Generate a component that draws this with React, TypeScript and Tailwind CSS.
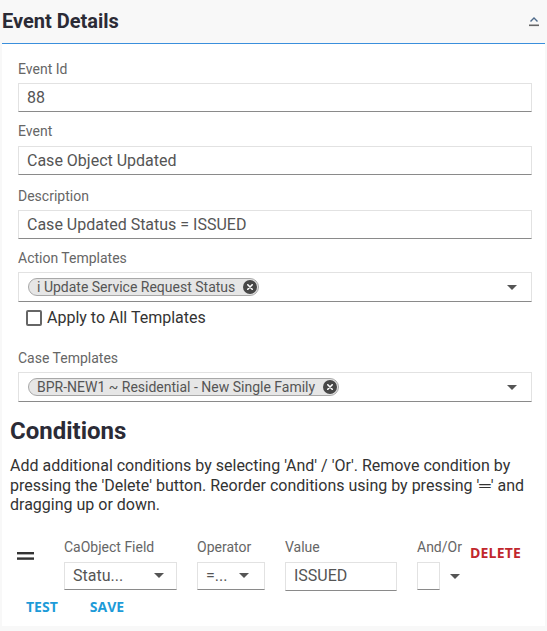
import React from "react";

const Caret = () => (
  <svg width="10" height="5" viewBox="0 0 10 5" className="shrink-0">
    <path d="M0 0h10L5 5z" fill="#555" />
  </svg>
);

const CloseCircle = () => (
  <span className="w-[14px] h-[14px] rounded-full bg-[#474747] flex items-center justify-center shrink-0">
    <svg width="6" height="6" viewBox="0 0 6 6">
      <path d="M0.8 0.8L5.2 5.2M5.2 0.8L0.8 5.2" stroke="#fff" strokeWidth="1.6" strokeLinecap="round" />
    </svg>
  </span>
);

const Label = ({ children, className = "" }: { children: React.ReactNode; className?: string }) => (
  <div className={"h-[20px] leading-[20px] text-[14px] text-[#666] " + className}>{children}</div>
);

const TextBox = ({ value, className = "" }: { value: string; className?: string }) => (
  <div
    className={
      "h-[29px] border border-[#e2e2e2] border-b-[#8a8a8a] pl-[8px] flex items-center text-[16px] text-[#555] " +
      className
    }
  >
    {value}
  </div>
);

const ChipSelect = ({ chip, className = "" }: { chip: string; className?: string }) => (
  <div
    className={
      "h-[30px] border border-[#e2e2e2] border-b-[#8a8a8a] pl-[9px] pr-[14px] flex items-center justify-between " +
      className
    }
  >
    <span className="h-[18px] rounded-full border border-[#a8a8a8] bg-[#e6e6e6] pl-[8px] pr-[1px] flex items-center gap-[8px] text-[14px] leading-none text-[#555]">
      {chip}
      <CloseCircle />
    </span>
    <Caret />
  </div>
);

export default function App() {
  return (
    <div className="w-[547px] h-[631px] bg-[#f8f8f8] font-['Roboto',sans-serif] overflow-hidden">
      <div className="h-[43px] flex items-center justify-between pl-[2px] pr-[8px] pb-[2px]">
        <h1 className="text-[20px] font-bold leading-none text-[#2b2b36]">Event Details</h1>
        <svg width="10" height="11" viewBox="0 0 10 11" className="mt-[2px]">
          <path d="M1.5 5.5L5 2L8.5 5.5" stroke="#4d6a8a" strokeWidth="1.4" fill="none" />
          <rect x="0" y="8.5" width="10" height="1.6" fill="#666" />
        </svg>
      </div>
      <div className="ml-[2px] w-[543px] bg-white border-t border-[#3a8fdc] pb-[9px]">
        <div className="pl-[16px] pr-[13px] pt-[15px]">
          <Label>Event Id</Label>
          <TextBox value="88" className="mt-[4px]" />
          <Label className="mt-[9px]">Event</Label>
          <TextBox value="Case Object Updated" className="mt-[5px]" />
          <Label className="mt-[11px]">Description</Label>
          <TextBox value="Case Updated Status = ISSUED" className="mt-[4px]" />
          <Label className="mt-[9px]">Action Templates</Label>
          <ChipSelect chip="i Update Service Request Status" className="mt-[4px]" />
          <div className="h-[32px] pl-[8px] flex items-center gap-[5px]">
            <span className="w-[16px] h-[16px] border-2 border-[#666] rounded-[2px]" />
            <span className="text-[16px] text-[#333]">Apply to All Templates</span>
          </div>
          <Label className="mt-[14px]">Case Templates</Label>
          <ChipSelect chip="BPR-NEW1 ~ Residential - New Single Family" className="mt-[4px]" />
        </div>
        <div className="pl-[8px] pr-[6px]">
          <h2 className="mt-[14px] text-[24px] font-bold leading-[30px] text-[#2b2b36]">Conditions</h2>
          <p className="mt-[10px] text-[16px] leading-[19.5px] text-[#333]">
            Add additional conditions by selecting 'And' / 'Or'. Remove condition by pressing the 'Delete' button.
            Reorder conditions using by pressing '═' and dragging up or down.
          </p>
        </div>
        <div className="mt-[22px] flex items-start pl-[15px]">
          <svg width="17" height="8" viewBox="0 0 17 8" className="mt-[15px] shrink-0">
            <rect x="0" y="0" width="17" height="2.4" fill="#333" />
            <rect x="0" y="5.4" width="17" height="2.4" fill="#333" />
          </svg>
          <div className="ml-[30px] w-[113px]">
            <Label>CaObject Field</Label>
            <div className="mt-[5px] h-[28px] border border-[#e2e2e2] border-b-[#8a8a8a] pl-[8px] pr-[12px] flex items-center justify-between text-[16px] text-[#555]">
              <span>Statu...</span>
              <Caret />
            </div>
          </div>
          <div className="ml-[20px] w-[68px]">
            <Label>Operator</Label>
            <div className="mt-[5px] h-[28px] border border-[#e2e2e2] border-b-[#8a8a8a] pl-[8px] pr-[15px] flex items-center justify-between text-[16px] text-[#555]">
              <span>=...</span>
              <Caret />
            </div>
          </div>
          <div className="ml-[20px] w-[112px]">
            <Label>Value</Label>
            <TextBox value="ISSUED" className="mt-[5px] h-[28px]" />
          </div>
          <div className="ml-[20px]">
            <Label>And/Or</Label>
            <div className="mt-[5px] flex items-center">
              <div className="w-[23px] h-[28px] border border-[#e2e2e2] border-b-[#8a8a8a]" />
              <span className="ml-[10px] mt-[2px]">
                <Caret />
              </span>
            </div>
          </div>
          <div className="ml-[8px] mt-[6px] font-['Open_Sans',sans-serif] font-bold text-[14px] leading-[20px] text-[#c1272d] tracking-[0.2px]">
            DELETE
          </div>
        </div>
        <div className="mt-[6px] flex pl-[24px] gap-[32px] font-['Open_Sans',sans-serif] font-bold text-[14px] leading-[20px] text-[#1d9bd8]">
          <span>TEST</span>
          <span>SAVE</span>
        </div>
      </div>
    </div>
  );
}
